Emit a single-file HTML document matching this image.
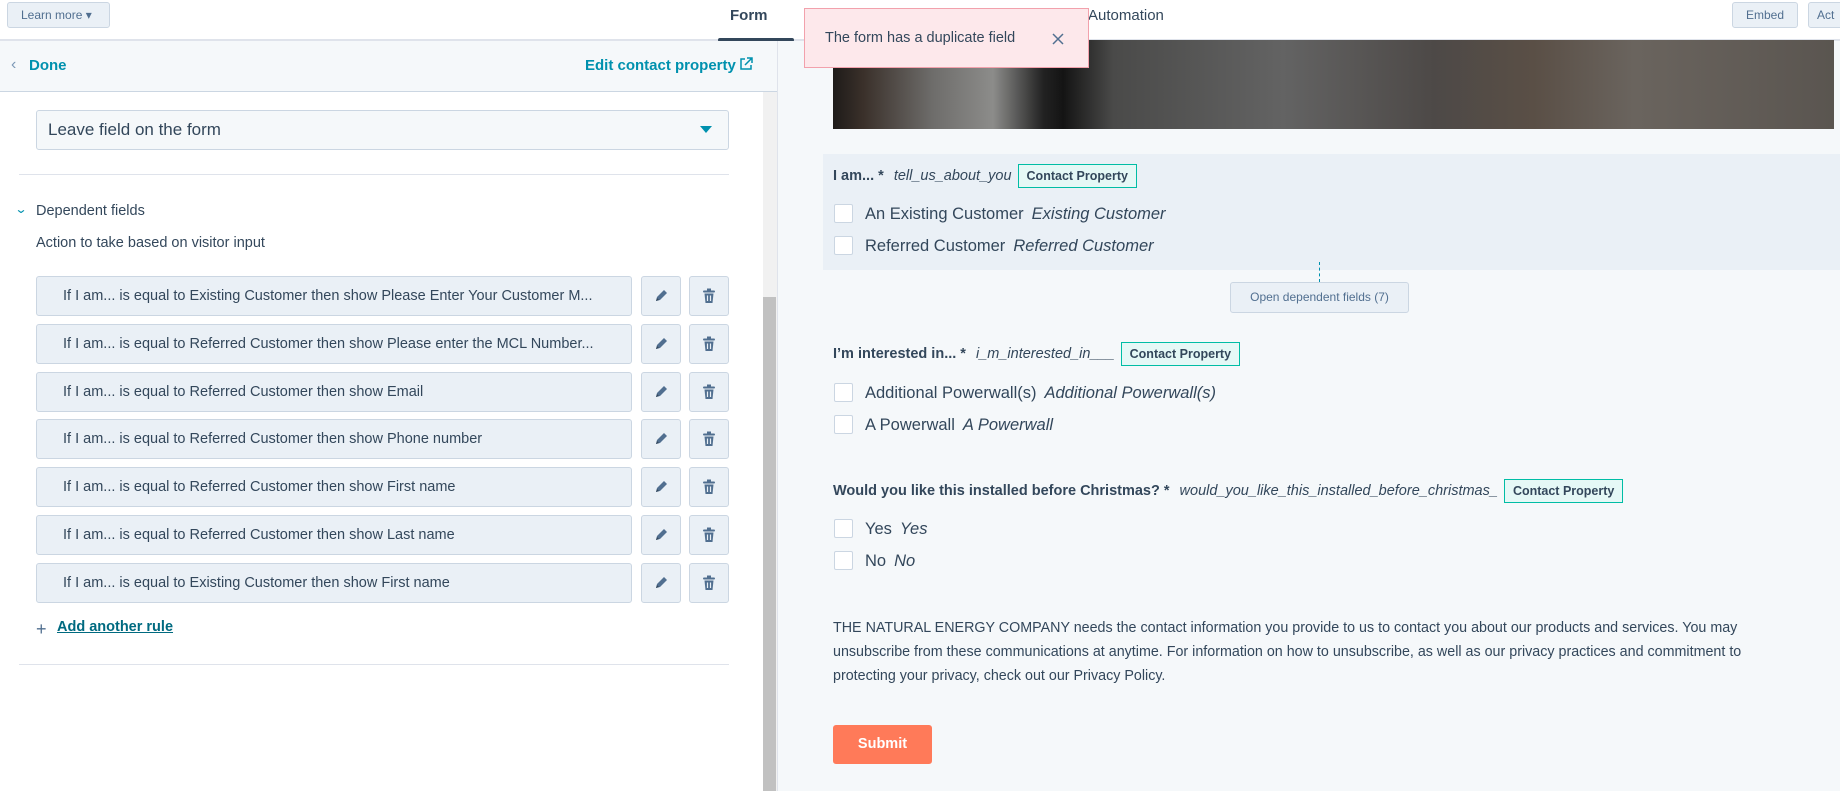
<!DOCTYPE html>
<html><head><meta charset="utf-8"><style>
*{box-sizing:border-box;margin:0;padding:0}
body{width:1840px;height:791px;overflow:hidden;font-family:"Liberation Sans",sans-serif;color:#33475b;background:#fff;position:relative}
.a{position:absolute}
.btn{border:1px solid #cbd6e2;background:#eaf0f6;border-radius:3px}
.rule{left:36px;width:596px;height:40px;background:#eaf0f6;border:1px solid #cbd6e2;border-radius:3px;font-size:14.5px;line-height:38px;padding-left:26px;color:#33475b;white-space:nowrap;overflow:hidden}
.ib{width:40px;height:40px;background:#eaf0f6;border:1px solid #cbd6e2;border-radius:3px;display:flex;align-items:center;justify-content:center}
.cb{width:19px;height:19px;border:1px solid #cbd6e2;background:#fff;border-radius:2px}
.opt{font-size:16.5px;color:#33475b}
.opt i{margin-left:8px}
.lbl{font-size:14.5px;font-weight:bold;color:#33475b;white-space:nowrap}
.lbl i{font-weight:normal;margin-left:6px}
.tag{display:inline-block;border:1px solid #00bda5;background:#e5f8f6;font-size:12.5px;font-weight:bold;padding:4px 8px;margin-left:6px;vertical-align:middle}
</style></head><body>
<div class="a btn" style="left:7px;top:2px;width:103px;height:26px;font-size:12px;color:#516f90;line-height:24px;padding-left:13px">Learn more ▾</div>
<div class="a" style="left:0;top:39px;width:1840px;height:2px;background:#dfe3eb"></div>
<div class="a" style="left:730px;top:7px;font-size:15px;font-weight:bold;color:#33475b">Form</div>
<div class="a" style="left:718px;top:38px;width:76px;height:4px;background:#33475b;border-radius:2px"></div>
<div class="a" style="left:1088px;top:7px;font-size:15px;color:#33475b">Automation</div>
<div class="a btn" style="left:1732px;top:2px;width:66px;height:26px;font-size:12px;color:#516f90;line-height:24px;text-align:center">Embed</div>
<div class="a btn" style="left:1808px;top:2px;width:60px;height:26px;font-size:12px;color:#516f90;line-height:24px;padding-left:8px">Act</div>
<div class="a" style="left:0;top:41px;width:777px;height:51px;background:#f5f8fa;border-bottom:1px solid #cbd6e2"></div>
<div class="a" style="left:11px;top:56px;font-size:16px;color:#7c98b6">‹</div>
<div class="a" style="left:29px;top:57px;font-size:15px;font-weight:bold;color:#0091ae">Done</div>
<div class="a" style="left:585px;top:57px;font-size:15px;font-weight:bold;color:#0091ae">Edit contact property</div>
<svg class="a" style="left:739px;top:57px" width="14" height="14" viewBox="0 0 14 14"><path d="M6 2H2v10h10V8M8 1h5v5M13 1L6 8" fill="none" stroke="#0091ae" stroke-width="1.5"/></svg>
<div class="a" style="left:763px;top:92px;width:14px;height:699px;background:#f1f1f1"></div>
<div class="a" style="left:763px;top:297px;width:13px;height:494px;background:#c1c1c1"></div>
<div class="a" style="left:777px;top:41px;width:1px;height:750px;background:#dfe3eb"></div>
<div class="a" style="left:36px;top:110px;width:693px;height:40px;border:1px solid #cbd6e2;border-radius:3px;background:#f5f8fa;font-size:17px;line-height:38px;padding-left:11px">Leave field on the form</div>
<div class="a" style="left:700px;top:126px;width:0;height:0;border-left:6px solid transparent;border-right:6px solid transparent;border-top:7px solid #0091ae"></div>
<div class="a" style="left:19px;top:174px;width:710px;height:1px;background:#dfe3eb"></div>
<div class="a" style="left:16px;top:202px;font-size:12px;color:#0091ae;transform:scaleX(1.3)">⌄</div>
<div class="a" style="left:36px;top:203px;font-size:14.5px">Dependent fields</div>
<div class="a" style="left:36px;top:235px;font-size:14.5px">Action to take based on visitor input</div>

<div class="a rule" style="top:276px">If I am... is equal to Existing Customer then show Please Enter Your Customer M...</div>
<div class="a rule" style="top:324px">If I am... is equal to Referred Customer then show Please enter the MCL Number...</div>
<div class="a rule" style="top:372px">If I am... is equal to Referred Customer then show Email</div>
<div class="a rule" style="top:419px">If I am... is equal to Referred Customer then show Phone number</div>
<div class="a rule" style="top:467px">If I am... is equal to Referred Customer then show First name</div>
<div class="a rule" style="top:515px">If I am... is equal to Referred Customer then show Last name</div>
<div class="a rule" style="top:563px">If I am... is equal to Existing Customer then show First name</div>

<div id="icons"></div>
<script>
var tops=[276,324,372,419,467,515,563],h='';
tops.forEach(function(t){
h+='<div class="a ib" style="left:641px;top:'+t+'px"><svg width="16" height="16" viewBox="0 0 16 16"><path d="M3 13l1-4 7-7 3 3-7 7z" fill="#516f90"/><path d="M3 13l1-3 2 2z" fill="#33475b"/></svg></div>';
h+='<div class="a ib" style="left:689px;top:'+t+'px"><svg width="14" height="16" viewBox="0 0 14 16"><rect x="5" y="0.5" width="4" height="2" fill="#516f90"/><rect x="1" y="2.5" width="12" height="2" rx="1" fill="#516f90"/><path d="M2.5 5.5h9l-1 9.5h-7z" fill="#516f90"/><path d="M5.5 7.5v5.5M8.5 7.5v5.5" stroke="#eaf0f6" stroke-width="1.2"/></svg></div>';
});
document.getElementById('icons').outerHTML=h;
</script>
<div class="a" style="left:36px;top:619px;font-size:18px;color:#516f90">+</div>
<div class="a" style="left:57px;top:619px;font-size:14.5px;font-weight:bold;color:#006a80;text-decoration:underline">Add another rule</div>
<div class="a" style="left:19px;top:664px;width:710px;height:1px;background:#dfe3eb"></div>

<div class="a" style="left:778px;top:41px;width:1062px;height:750px;background:#f5f8fa"></div>
<div class="a" style="left:833px;top:40px;width:1001px;height:89px;background:linear-gradient(90deg,#1e1b19 0%,#3a302a 3%,#6e6d6b 10%,#8c8c8a 16%,#222 21%,#141414 23%,#4a4a49 28%,#636363 45%,#4d4947 60%,#5a4f46 70%,#6a645e 80%,#5a5550 100%)"></div>
<div class="a" style="left:823px;top:154px;width:1017px;height:116px;background:#eaf0f6"></div>
<div class="a lbl" style="left:833px;top:164px">I am... * <i>tell_us_about_you</i><span class="tag">Contact Property</span></div>
<div class="a cb" style="left:834px;top:204px"></div><div class="a opt" style="left:865px;top:205px">An Existing Customer<i>Existing Customer</i></div>
<div class="a cb" style="left:834px;top:236px"></div><div class="a opt" style="left:865px;top:237px">Referred Customer<i>Referred Customer</i></div>
<div class="a" style="left:1319px;top:262px;width:0;height:20px;border-left:1px dashed #0091ae"></div>
<div class="a btn" style="left:1230px;top:282px;width:179px;height:31px;font-size:12px;color:#516f90;line-height:29px;text-align:center">Open dependent fields (7)</div>

<div class="a lbl" style="left:833px;top:342px">I’m interested in... * <i>i_m_interested_in___</i><span class="tag">Contact Property</span></div>
<div class="a cb" style="left:834px;top:383px"></div><div class="a opt" style="left:865px;top:384px">Additional Powerwall(s)<i>Additional Powerwall(s)</i></div>
<div class="a cb" style="left:834px;top:415px"></div><div class="a opt" style="left:865px;top:416px">A Powerwall<i>A Powerwall</i></div>

<div class="a lbl" style="left:833px;top:479px">Would you like this installed before Christmas? * <i>would_you_like_this_installed_before_christmas_</i><span class="tag">Contact Property</span></div>
<div class="a cb" style="left:834px;top:519px"></div><div class="a opt" style="left:865px;top:520px">Yes<i>Yes</i></div>
<div class="a cb" style="left:834px;top:551px"></div><div class="a opt" style="left:865px;top:552px">No<i>No</i></div>

<div class="a" style="left:833px;top:616px;width:965px;font-size:14.3px;line-height:24px;color:#33475b">THE NATURAL ENERGY COMPANY needs the contact information you provide to us to contact you about our products and services. You may unsubscribe from these communications at anytime. For information on how to unsubscribe, as well as our privacy practices and commitment to protecting your privacy, check out our Privacy Policy.</div>
<div class="a" style="left:833px;top:725px;width:99px;height:39px;background:#ff7a59;border-radius:3px;color:#fff;font-size:14.5px;font-weight:bold;text-align:center;line-height:39px">Submit</div>

<div class="a" style="left:804px;top:8px;width:285px;height:60px;background:#fde8eb;border:1px solid #f2a1ac"></div>
<div class="a" style="left:825px;top:30px;font-size:14.5px;color:#33475b">The form has a duplicate field</div>
<svg class="a" style="left:1052px;top:33px" width="12" height="12" viewBox="0 0 12 12"><path d="M1 1l10 10M11 1L1 11" stroke="#516f90" stroke-width="1.5"/></svg>
</body></html>
